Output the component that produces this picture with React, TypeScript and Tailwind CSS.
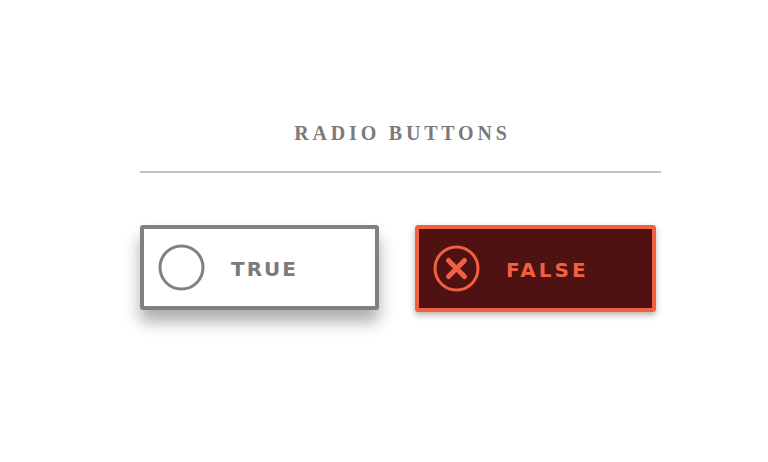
const options = [
  { label: "TRUE", checked: false },
  { label: "FALSE", checked: true },
];

function RadioIcon({ checked }: { checked: boolean }) {
  const color = checked ? "#f2613f" : "#808080";
  return (
    <svg width="47" height="47" viewBox="0 0 47 47" className="shrink-0">
      <circle cx="23.5" cy="23.5" r="21.5" fill="none" stroke={color} strokeWidth="3" />
      {checked && (
        <path
          d="M15.5 15.5 L31.5 31.5 M31.5 15.5 L15.5 31.5"
          stroke={color}
          strokeWidth="5"
          strokeLinecap="round"
        />
      )}
    </svg>
  );
}

export default function App() {
  return (
    <div className="w-[768px] h-[462px] bg-white overflow-hidden">
      <div className="ml-[140px] w-[521px] pt-[120px]">
        <h2 className="text-center font-['Liberation_Serif',serif] font-bold text-[20px] leading-[26px] tracking-[0.19em] text-[#7a7a7a] pl-[4px]">
          RADIO BUTTONS
        </h2>
        <div className="mt-[25px] h-[2px] bg-[#c4c4c4]" />

        <div className="mt-[52px] flex gap-[36px]">
          {options.map((opt) => (
            <button
              key={opt.label}
              className={
                opt.checked
                  ? "w-[241px] h-[87px] flex items-center pl-[14px] rounded-[3px] border-4 border-[#f2613f] bg-[#4e1212] shadow-[0_3px_6px_rgba(0,0,0,0.3)]"
                  : "w-[239px] h-[85px] flex items-center pl-[14px] rounded-[3px] border-4 border-[#808080] bg-white shadow-[0_12px_16px_rgba(0,0,0,0.32)]"
              }
            >
              <RadioIcon checked={opt.checked} />
              <span
                className={
                  opt.checked
                    ? "ml-[26px] pt-[2px] font-['DejaVu_Sans',sans-serif] font-bold text-[20px] tracking-[3px] text-[#f2613f]"
                    : "ml-[26px] pt-[2px] font-['DejaVu_Sans',sans-serif] font-bold text-[20px] tracking-[2px] text-[#7a7a7a]"
                }
              >
                {opt.label}
              </span>
            </button>
          ))}
        </div>
      </div>
    </div>
  );
}
